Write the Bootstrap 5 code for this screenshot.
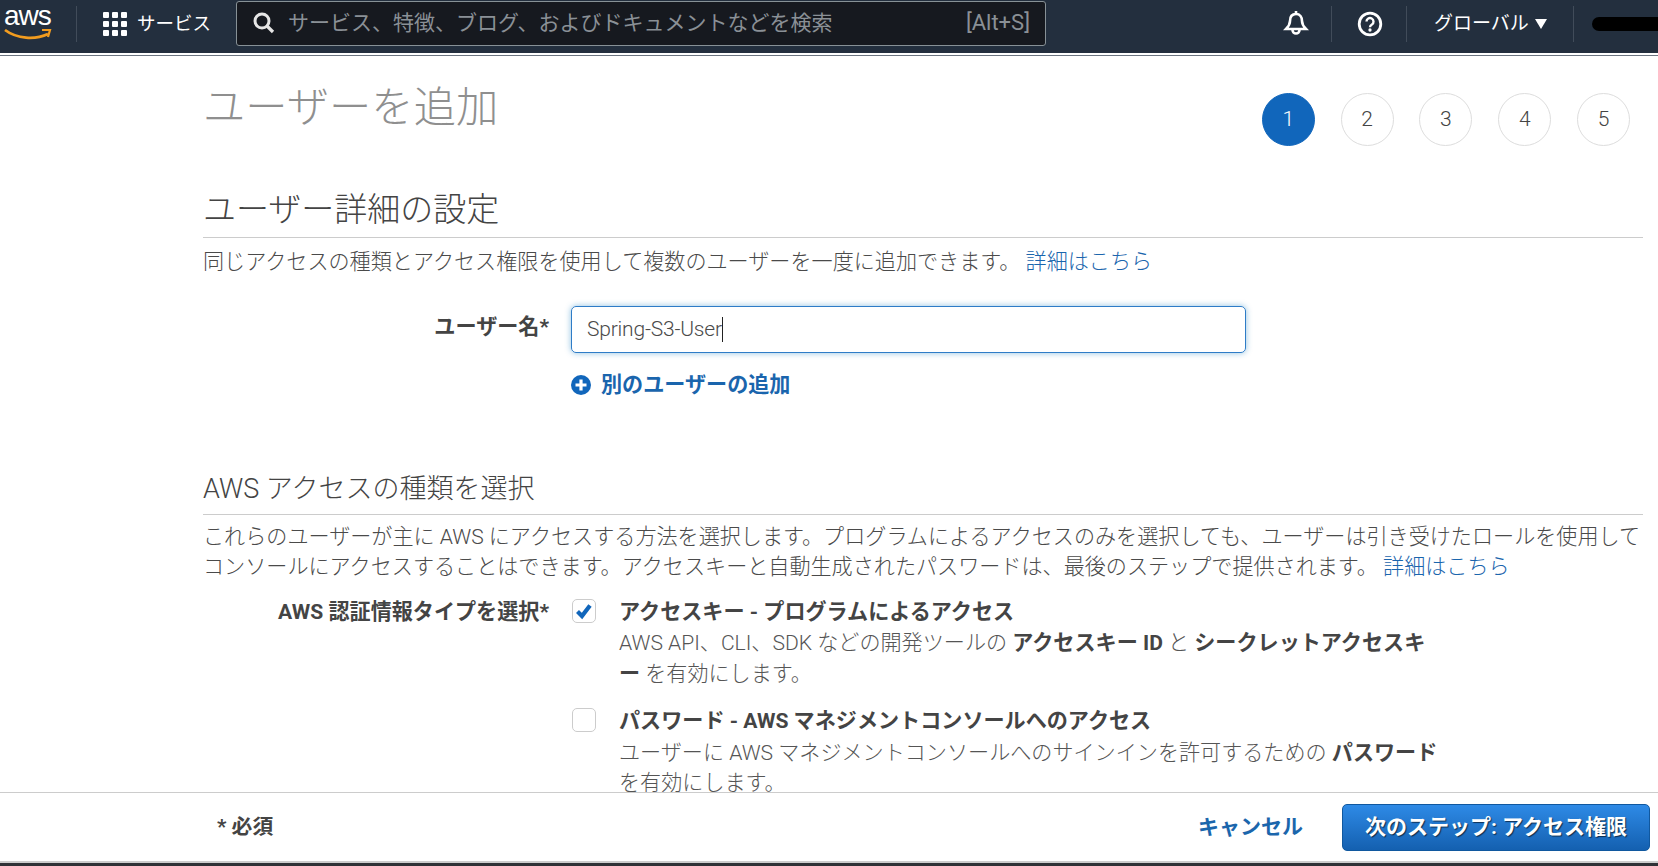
<!DOCTYPE html>
<html lang="ja">
<head>
<meta charset="utf-8">
<title>ユーザーを追加</title>
<link href="https://cdn.jsdelivr.net/npm/bootstrap@5.3.0/dist/css/bootstrap.min.css" rel="stylesheet">
<style>
html,body{height:100%}
body{font-family:Roboto,"Noto Sans CJK JP",sans-serif;font-weight:300;color:#4a4a4a;overflow:hidden;background:#fff;font-size:21.100px;line-height:30.500px}
.shell{height:866px}
.topnav{height:53px;padding-bottom:5px;background:#232f3e;color:#fff;flex:none;font-weight:400}
.navline{height:3px;background:#fff;border-bottom:1px solid #6b7480;flex:none}
.logo{width:76px;height:48px;padding-left:4px;flex:none}
.logotext{display:block;font:400 28px/32px "Liberation Sans",sans-serif;letter-spacing:-1px;color:#fff}
.logoarrow{margin-top:-5px}
.vsep{width:1px;height:36px;background:#414c5a;flex:none}
.svc{width:159px;padding-left:26px;flex:none;font-size:18.500px;gap:10px}
.searchbox{width:810px;height:45px;background:#16191f;border:1px solid #879196;border-radius:3px;color:#8a9096;flex:none;margin-top:-2px;padding:0 15px;font-size:21px}
.searchbox svg{margin-right:12px}
.hotkey{font-size:22px}
.navright{margin-left:auto}
.navcell{height:48px;flex:none}
.bellcell{width:76px;padding-left:6px}
.helpcell{width:74px;padding-left:2px}
.regioncell{width:166px;font-size:19px;padding-left:27px;gap:2px}
.acct{width:84px;padding-left:18px}
.scribble{display:block;width:72px;height:14px;background:#000;border-radius:7px 0 0 7px}
.mainarea{flex:1 1 auto;overflow:hidden;padding:0 15px 0 203px;min-height:0}
.titlerow{height:133px}
.pagetitle{font-size:42.300px;font-weight:300;color:#8f8f8f;margin:25px 0 0;line-height:54px}
.stepper{gap:25.800px;margin:37px 13px 0 0}
.stepdot{width:53px;height:53px;border-radius:50%;border:1px solid #ddd;color:#444;font-size:21px;font-family:Roboto,sans-serif}
.stepdot.curr{background:#1166bb;border-color:#1166bb;color:#fff}
.sechead{font-size:33px;font-weight:300;color:#444;line-height:42px;margin:0;padding-bottom:6px;border-bottom:1px solid #ccc}
.subhead{font-size:27px;font-weight:300;color:#444;line-height:36px;margin:0;padding-bottom:7px;border-bottom:1px solid #ccc}
.lnk{color:#1a65ad;text-decoration:none}
.intro{margin:9px 0 0}
.field{margin-top:28px}
.lab{width:346px;flex:none;text-align:right;font-weight:700;color:#444;margin:0}
.lab-name{line-height:42px}
.namebox{width:675px;height:47px;padding:1px 15px 0;border:1px solid #2e7cc7;border-radius:5px;box-shadow:0 0 6px rgba(0,115,187,.45);font-size:21px;color:#4a4a4a;font-weight:300;display:flex;align-items:center;margin-left:22px;letter-spacing:-.2px}
.caret{display:inline-block;width:1px;height:25px;background:#222}
.addrow{margin:17px 0 0 368px;font-weight:700;gap:10px;line-height:30px}
.aws-sec{margin-top:71px}
.longtext{margin:7px -6px 0 0}
.credrow{margin-top:14px}
.credlab{line-height:30px}
.opts{margin-left:23px;width:867px}
.opt{gap:23px;margin-bottom:17px}
.opt .form-check-input{width:24px;height:24px;margin:2px 0 0;border:1px solid #ccc;border-radius:5px;flex:none;float:none;box-shadow:none}
.opt .form-check-input:checked{background-color:#fff;border-color:#ccc;background-size:20px;background-image:url("data:image/svg+xml,%3Csvg xmlns='http://www.w3.org/2000/svg' viewBox='0 0 20 20'%3E%3Cpath d='M3.500 10.500l4.500 4.500 8-10.500' fill='none' stroke='%231166bb' stroke-width='4.200'/%3E%3C/svg%3E")}
.optname{display:block;font-weight:700;color:#444}
.optdesc{display:block;color:#555;margin-top:1px}
.optdesc b{font-weight:700;color:#444}
.foot{height:71px;flex:none;border-top:1px solid #ccc;border-bottom:2px solid #ccc;padding:0 8px 0 217px}
.req{font-weight:700;font-size:20.800px;color:#444}
.cancel{font-weight:700;font-size:21px;color:#1b66ac;text-decoration:none;margin-right:39px;margin-left:auto}
.nextbtn{width:308px;height:47px;padding:0;background:linear-gradient(#2e8ae6,#1460b0);border:1px solid #10589f;border-radius:5px;font-weight:700;font-size:21px;color:#fff;text-shadow:1px 1px 1px rgba(0,0,0,.6);line-height:1}
.bottomdark{height:3px;background:#2f3136;flex:none}
</style>
</head>
<body>
<div class="shell d-flex flex-column">
  <nav class="topnav d-flex align-items-center">
    <a class="logo d-block text-decoration-none">
      <span class="logotext">aws</span>
      <svg width="48" height="14" viewBox="0 0 48 14" class="d-block logoarrow"><path d="M1 3c12 9 30 10 43 4" fill="none" stroke="#f29c1f" stroke-width="2.800"/><path d="M38 3l8 0-2 7" fill="none" stroke="#f29c1f" stroke-width="2.200"/></svg>
    </a>
    <span class="vsep"></span>
    <div class="svc d-flex align-items-center">
      <svg width="24" height="24" viewBox="0 0 24 24" fill="#fff"><rect width="6" height="6" rx="1"/><rect x="9" width="6" height="6" rx="1"/><rect x="18" width="6" height="6" rx="1"/><rect y="9" width="6" height="6" rx="1"/><rect x="9" y="9" width="6" height="6" rx="1"/><rect x="18" y="9" width="6" height="6" rx="1"/><rect y="18" width="6" height="6" rx="1"/><rect x="9" y="18" width="6" height="6" rx="1"/><rect x="18" y="18" width="6" height="6" rx="1"/></svg>
      <span>サービス</span>
    </div>
    <div class="searchbox d-flex align-items-center">
      <svg width="24" height="24" viewBox="0 0 24 24"><circle cx="10" cy="10" r="7" fill="none" stroke="#e6e6e6" stroke-width="3"/><path d="M15 15l6 6" stroke="#e6e6e6" stroke-width="3.200"/></svg>
      <span class="flex-grow-1">サービス、特徴、ブログ、およびドキュメントなどを検索</span>
      <span class="hotkey">[Alt+S]</span>
    </div>
    <div class="navright d-flex align-items-center">
      <div class="navcell bellcell d-flex align-items-center justify-content-center">
        <svg width="26" height="28" viewBox="0 0 26 28" fill="none" stroke="#fff" stroke-width="2.600"><path d="M13 1v3"/><path d="M13 4c-4 0-6 3-6 7 0 4-2 6-4 8h20c-2-2-4-4-4-8 0-4-2-7-6-7z"/><path d="M9.500 20a3.500 3.500 0 0 0 7 0"/></svg>
      </div>
      <span class="vsep"></span>
      <div class="navcell helpcell d-flex align-items-center justify-content-center">
        <svg width="26" height="26" viewBox="0 0 26 26" fill="none" stroke="#fff" stroke-width="2.800"><circle cx="13" cy="13" r="10.800"/><path d="M9.500 10.500a3.500 3.500 0 1 1 5.400 3c-1.300.8-1.900 1.300-1.900 2.700" stroke-width="2.400"/><circle cx="13" cy="19" r=".9" stroke-width="1.500"/></svg>
      </div>
      <span class="vsep"></span>
      <div class="navcell regioncell d-flex align-items-center">
        <span>グローバル</span>
        <svg width="12" height="10" viewBox="0 0 12 10" class="ms-1"><path d="M0 0h12L6 10z" fill="#fff"/></svg>
      </div>
      <span class="vsep"></span>
      <div class="navcell acct d-flex align-items-center"><span class="scribble"></span></div>
    </div>
  </nav>
  <div class="navline"></div>

  <main class="mainarea">
    <div class="titlerow d-flex justify-content-between align-items-start">
      <h1 class="pagetitle">ユーザーを追加</h1>
      <div class="stepper d-flex">
        <span class="stepdot curr d-flex align-items-center justify-content-center">1</span>
        <span class="stepdot d-flex align-items-center justify-content-center">2</span>
        <span class="stepdot d-flex align-items-center justify-content-center">3</span>
        <span class="stepdot d-flex align-items-center justify-content-center">4</span>
        <span class="stepdot d-flex align-items-center justify-content-center">5</span>
      </div>
    </div>
    <h2 class="sechead">ユーザー詳細の設定</h2>
    <p class="intro">同じアクセスの種類とアクセス権限を使用して複数のユーザーを一度に追加できます。 <a class="lnk" href="#">詳細はこちら</a></p>
    <div class="field d-flex align-items-start">
      <label class="lab lab-name">ユーザー名*</label>
      <div class="namebox" role="textbox">Spring-S3-User<span class="caret"></span></div>
    </div>
    <div class="addrow d-flex align-items-center">
      <svg width="20" height="20" viewBox="0 0 20 20"><circle cx="10" cy="10" r="10" fill="#1166bb"/><path d="M10 4.500v11M4.500 10h11" stroke="#fff" stroke-width="3.200"/></svg>
      <a class="lnk" href="#">別のユーザーの追加</a>
    </div>
    <section class="aws-sec">
      <h3 class="subhead">AWS アクセスの種類を選択</h3>
      <p class="longtext">これらのユーザーが主に AWS にアクセスする方法を選択します。プログラムによるアクセスのみを選択しても、ユーザーは引き受けたロールを使用してコンソールにアクセスすることはできます。アクセスキーと自動生成されたパスワードは、最後のステップで提供されます。 <a class="lnk" href="#">詳細はこちら</a></p>
      <div class="credrow d-flex align-items-start">
        <label class="lab credlab">AWS 認証情報タイプを選択*</label>
        <div class="opts">
          <div class="opt d-flex align-items-start">
            <input class="form-check-input" type="checkbox" checked>
            <div>
              <span class="optname">アクセスキー - プログラムによるアクセス</span>
              <span class="optdesc">AWS API、CLI、SDK などの開発ツールの <b>アクセスキー ID</b> と <b>シークレットアクセスキー</b> を有効にします。</span>
            </div>
          </div>
          <div class="opt d-flex align-items-start">
            <input class="form-check-input" type="checkbox">
            <div>
              <span class="optname">パスワード - AWS マネジメントコンソールへのアクセス</span>
              <span class="optdesc">ユーザーに AWS マネジメントコンソールへのサインインを許可するための <b>パスワード</b> を有効にします。</span>
            </div>
          </div>
        </div>
      </div>
    </section>
  </main>

  <footer class="foot d-flex align-items-center">
    <span class="req">* 必須</span>
    <a class="cancel" href="#">キャンセル</a>
    <button class="btn nextbtn" type="button">次のステップ: アクセス権限</button>
  </footer>
  <div class="bottomdark"></div>
</div>
</body>
</html>
